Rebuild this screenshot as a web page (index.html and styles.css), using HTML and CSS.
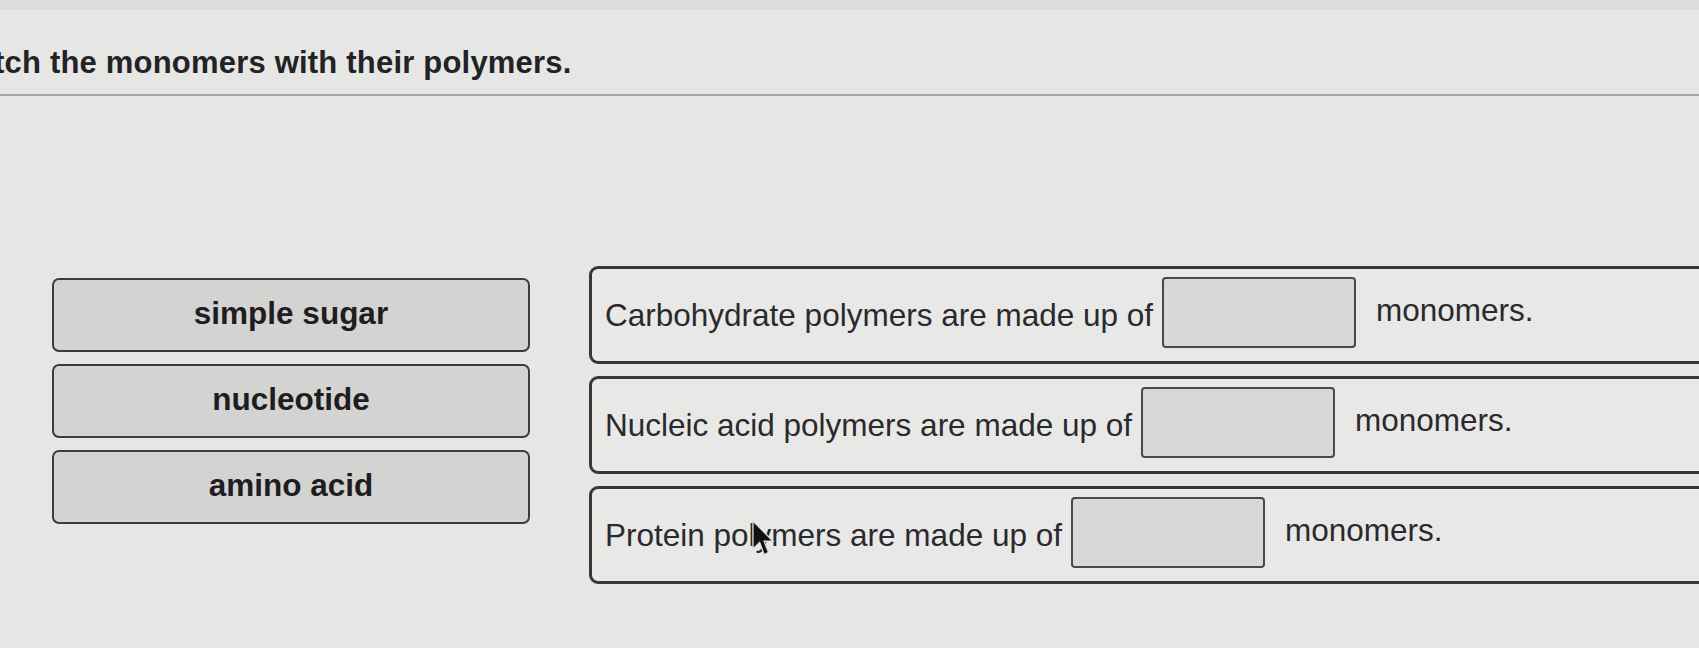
FILE: index.html
```html
<!DOCTYPE html>
<html>
<head>
<meta charset="utf-8">
<link rel="stylesheet" href="styles.css">
</head>
<body>
<div class="topband"></div>
<h1 class="title">tch the monomers with their polymers.</h1>
<div class="rule"></div>
<main class="match">
  <div class="choices">
    <div class="chip">simple sugar</div>
    <div class="chip">nucleotide</div>
    <div class="chip">amino acid</div>
  </div>
  <div class="targets">
    <div class="target"><span>Carbohydrate polymers are made up of</span><span class="blank"></span><span class="after">monomers.</span></div>
    <div class="target"><span>Nucleic acid polymers are made up of</span><span class="blank"></span><span class="after">monomers.</span></div>
    <div class="target cursor-host"><span>Protein polymers are made up of</span><span class="blank"></span><span class="after">monomers.</span>
      <svg class="cursor" width="26" height="38" viewBox="0 0 22 34"><path d="M2 1 L2 26 L8 20 L12 31 L16 29 L12 19 L20 19 Z" fill="#111" stroke="#ddd" stroke-width="1.2"/></svg>
    </div>
  </div>
</main>
</body>
</html>
```

FILE: styles.css
```css
html, body {
  margin: 0;
  padding: 0;
}
body {
  width: 1699px;
  height: 648px;
  overflow: hidden;
  background: #e6e6e4;
  font-family: "Liberation Sans", Arial, sans-serif;
  color: #1f1f22;
}
.topband {
  height: 10px;
  background: #dcdcda;
}
.title {
  margin: 35px 0 0 -6px;
  font-size: 31px;
  font-weight: bold;
  line-height: 36px;
  color: #232226;
  letter-spacing: 0.2px;
}
.rule {
  margin-top: 13px;
  height: 2px;
  background: #a3a3a3;
}
.match {
  display: flex;
  margin-top: 170px;
  padding-left: 52px;
}
.choices {
  display: flex;
  flex-direction: column;
  gap: 12px;
  width: 478px;
  flex-shrink: 0;
  margin-top: 12px;
}
.chip {
  height: 74px;
  box-sizing: border-box;
  border: 2.5px solid #3d3b42;
  border-radius: 7px;
  background: #d3d3d1;
  display: flex;
  align-items: center;
  justify-content: center;
  font-size: 31.5px;
  font-weight: bold;
  color: #1e1d21;
  padding-bottom: 4px;
}
.targets {
  display: flex;
  flex-direction: column;
  gap: 12px;
  margin-left: 59px;
  width: 1200px;
  flex-shrink: 0;
}
.target {
  position: relative;
  height: 98px;
  box-sizing: border-box;
  border: 3px solid #39373e;
  border-radius: 9px;
  background: #e8e8e6;
  display: flex;
  align-items: center;
  padding-left: 13px;
  font-size: 31.5px;
  color: #2a292d;
}
.blank {
  display: inline-block;
  width: 194px;
  height: 71px;
  box-sizing: border-box;
  border: 2.5px solid #4a484f;
  border-radius: 4px;
  background: #d8d8d6;
  margin: 0 20px 6px 9px;
}
.after {
  margin-bottom: 10px;
}
.cursor {
  position: absolute;
  left: 158px;
  top: 31px;
}
```
